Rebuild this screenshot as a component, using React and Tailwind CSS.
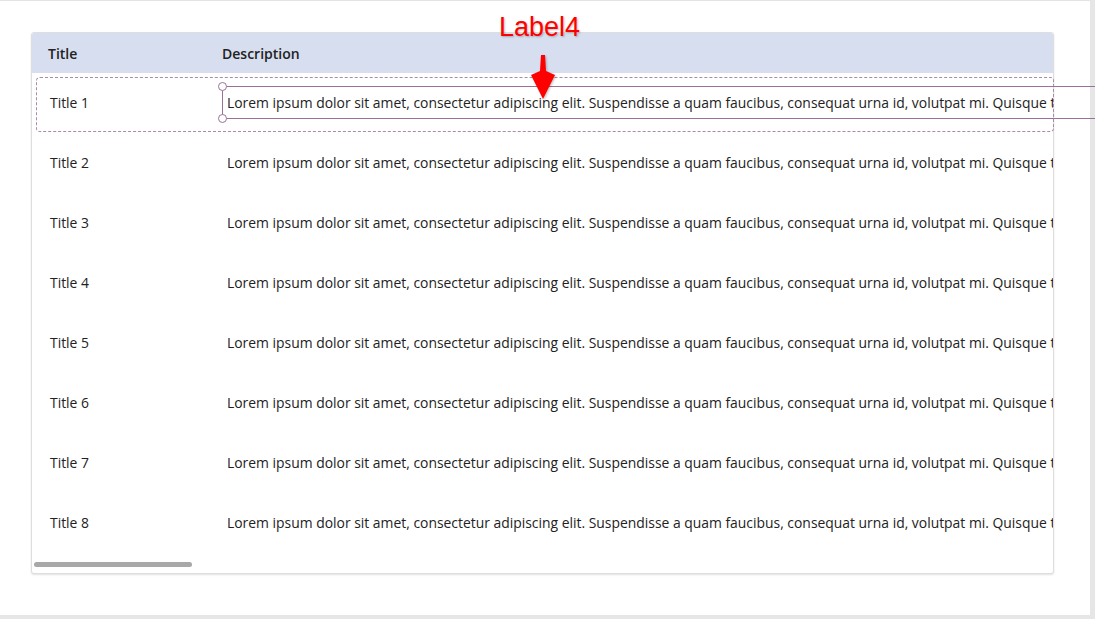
import React from "react";

const lorem =
  "Lorem ipsum dolor sit amet, consectetur adipiscing elit. Suspendisse a quam faucibus, consequat urna id, volutpat mi. Quisque tincidunt, nisl at faucibus varius, lorem lectus.";

const rows = [1, 2, 3, 4, 5, 6, 7, 8];

function App() {
  return (
    <div
      className="w-[1095px] h-[619px] bg-[#e6e6e6] overflow-hidden"
      style={{ fontFamily: "'Open Sans', 'Noto Sans', sans-serif" }}
    >
      <div className="relative w-[1090px] h-[615px] bg-white border-t border-[#e4e4e4] pt-[31px] pl-[31px]">
        {/* Gallery card */}
        <div className="w-[1023px] h-[542px] bg-white border border-[#dedede] rounded-[3px] shadow-[0_1px_2px_rgba(0,0,0,0.12)] overflow-hidden flex flex-col">
          <div className="h-[40px] shrink-0 bg-[#d7deef] flex items-center text-[14px] font-semibold text-[#222]">
            <div className="w-[190px] pl-[16px]">Title</div>
            <div>Description</div>
          </div>
          <div className="flex-1">
            {rows.map((n) => (
              <div key={n} className="h-[60px] flex items-center text-[13.9px] text-[#222]">
                <div className="w-[195px] shrink-0 pl-[18px]">Title {n}</div>
                <div className="whitespace-nowrap">{lorem}</div>
              </div>
            ))}
          </div>
          <div className="h-[13px] shrink-0 pl-[2px] pt-[2px]">
            <div className="w-[158px] h-[5px] rounded-full bg-[#a8a8a8]" />
          </div>
        </div>

        {/* Selection overlays */}
        <div className="absolute left-[36px] top-[76px] w-[1018px] h-[55px] border border-dashed border-[#a98aa9] rounded-[4px]" />
        <div className="absolute left-[222px] top-[85px] w-[880px] h-[33px] border border-[#9b719b]" />
        <div className="absolute left-[218px] top-[81px] w-[9px] h-[9px] rounded-full bg-white border border-[#9b719b]" />
        <div className="absolute left-[218px] top-[113px] w-[9px] h-[9px] rounded-full bg-white border border-[#9b719b]" />

        {/* Annotation */}
        <div
          className="absolute left-[499px] top-[13px] text-[27px] leading-none text-[#ff0000] [text-shadow:1px_1px_2px_rgba(0,0,0,0.25)]"
          style={{ fontFamily: "'Liberation Sans', Arial, sans-serif" }}
        >
          Label4
        </div>
        <svg
          className="absolute left-[528px] top-[52px]"
          width="30"
          height="48"
          viewBox="0 0 30 48"
          style={{ filter: "drop-shadow(1px 1px 1px rgba(0,0,0,0.25))" }}
        >
          <path d="M13 2 L17 2 L18 18 L27 22 L15 46 L3 22 L12 18 Z" fill="#ff0000" />
        </svg>
      </div>
    </div>
  );
}

export default App;
